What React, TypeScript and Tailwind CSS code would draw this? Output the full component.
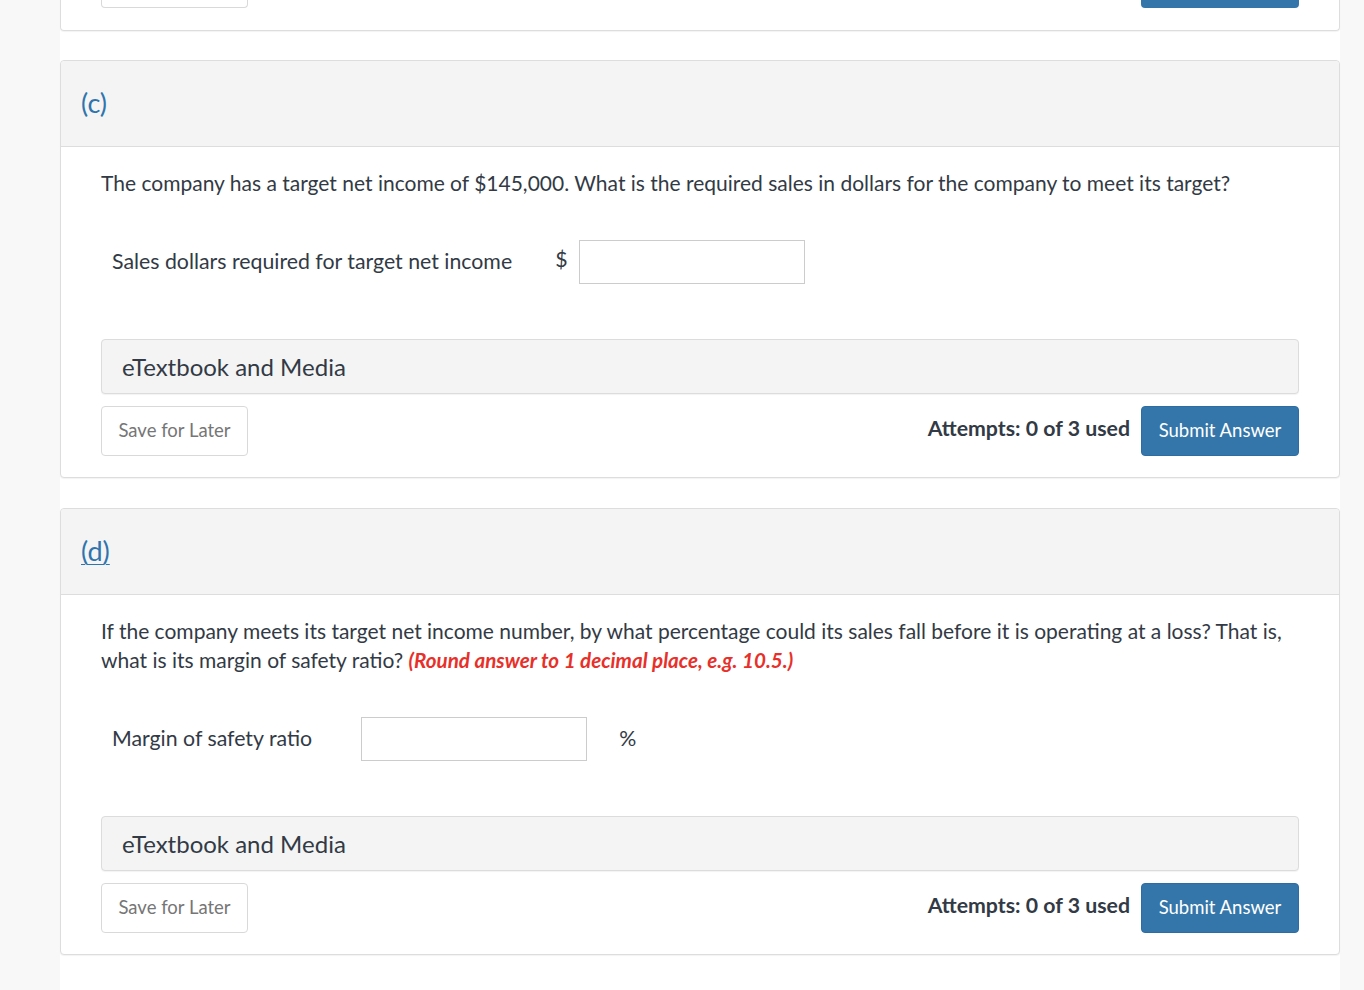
import React from 'react';

const FONT = { fontFamily: 'Lato, "Open Sans", Arial, sans-serif' };

const ActionRow: React.FC = () => (
  <div className="mt-[12px] flex items-center justify-between">
    <button className="h-[50px] w-[147px] rounded-[4px] border border-[#d9d9d9] bg-white text-[18.5px] text-[#767676]">
      Save for Later
    </button>
    <div className="flex items-center">
      <span className="mr-[11px] -mt-[4px] text-[21.3px] font-bold text-[#323a45]">Attempts: 0 of 3 used</span>
      <button className="h-[50px] w-[158px] rounded-[4px] border border-[#2e6da4] bg-[#3476a9] text-[18.5px] text-white">
        Submit Answer
      </button>
    </div>
  </div>
);

const Media: React.FC = () => (
  <div className="mt-[55px] flex h-[55px] items-center rounded-[4px] border border-[#dcdcdc] bg-[#f4f4f4] pl-[20px] text-[24px] text-[#323a45] shadow-[0_1px_1px_rgba(0,0,0,0.05)]">
    eTextbook and Media
  </div>
);

interface PartProps {
  label: string;
  underline?: boolean;
  children: React.ReactNode;
}

const Part: React.FC<PartProps> = ({ label, underline, children }) => (
  <div className="rounded-[4px] border border-[#dddddd] bg-white shadow-[0_1px_1px_rgba(0,0,0,0.05)]">
    <div className="flex h-[86px] items-center rounded-t-[4px] border-b border-[#dddddd] bg-[#f4f4f4] px-[20px]">
      <span className={`text-[27px] text-[#2f74ad] ${underline ? 'underline decoration-1 underline-offset-[3px]' : ''}`}>{label}</span>
    </div>
    <div className="px-[40px] pb-[21px] pt-[21px]">{children}</div>
  </div>
);

export default function App() {
  return (
    <div className="flex min-h-[990px] w-full bg-[#f8f8f8] text-[#323a45]" style={FONT}>
      <div className="w-[60px] shrink-0" />
      <div className="w-[1280px] shrink-0 bg-white pb-[36px]">
        <div className="flex h-[31px] items-start justify-between rounded-b-[4px] border-x border-b border-[#dddddd] px-[40px] shadow-[0_1px_1px_rgba(0,0,0,0.05)]">
          <div className="h-[8px] w-[147px] rounded-b-[4px] border-x border-b border-[#d9d9d9]" />
          <div className="h-[8px] w-[158px] rounded-b-[4px] bg-[#3476a9]" />
        </div>

        <div className="mt-[29px]">
          <Part label="(c)">
            <p className="text-[21px] leading-[29px]">
              The company has a target net income of $145,000. What is the required sales in dollars for the company to meet its target?
            </p>
            <div className="mt-[43px] flex items-center pl-[11px]">
              <span className="text-[21.3px]">Sales dollars required for target net income</span>
              <span className="ml-[43px] -mt-[4px] text-[21.3px]">$</span>
              <input className="ml-[11px] h-[44px] w-[226px] border border-[#cccccc] bg-white outline-none" />
            </div>
            <Media />
            <ActionRow />
          </Part>
        </div>

        <div className="mt-[30px]">
          <Part label="(d)" underline>
            <p className="text-[21px] leading-[29px]">
              If the company meets its target net income number, by what percentage could its sales fall before it is operating at a loss? That is, what is its margin of safety ratio?{' '}
              <span className="text-[20.6px] font-bold italic text-[#e8302a]">(Round answer to 1 decimal place, e.g. 10.5.)</span>
            </p>
            <div className="mt-[42px] flex items-center pl-[11px]">
              <span className="text-[21.3px]">Margin of safety ratio</span>
              <input className="ml-[49px] h-[44px] w-[226px] border border-[#cccccc] bg-white outline-none" />
              <span className="ml-[32px] text-[21.3px]">%</span>
            </div>
            <Media />
            <ActionRow />
          </Part>
        </div>
      </div>
      <div className="flex-1" />
    </div>
  );
}
